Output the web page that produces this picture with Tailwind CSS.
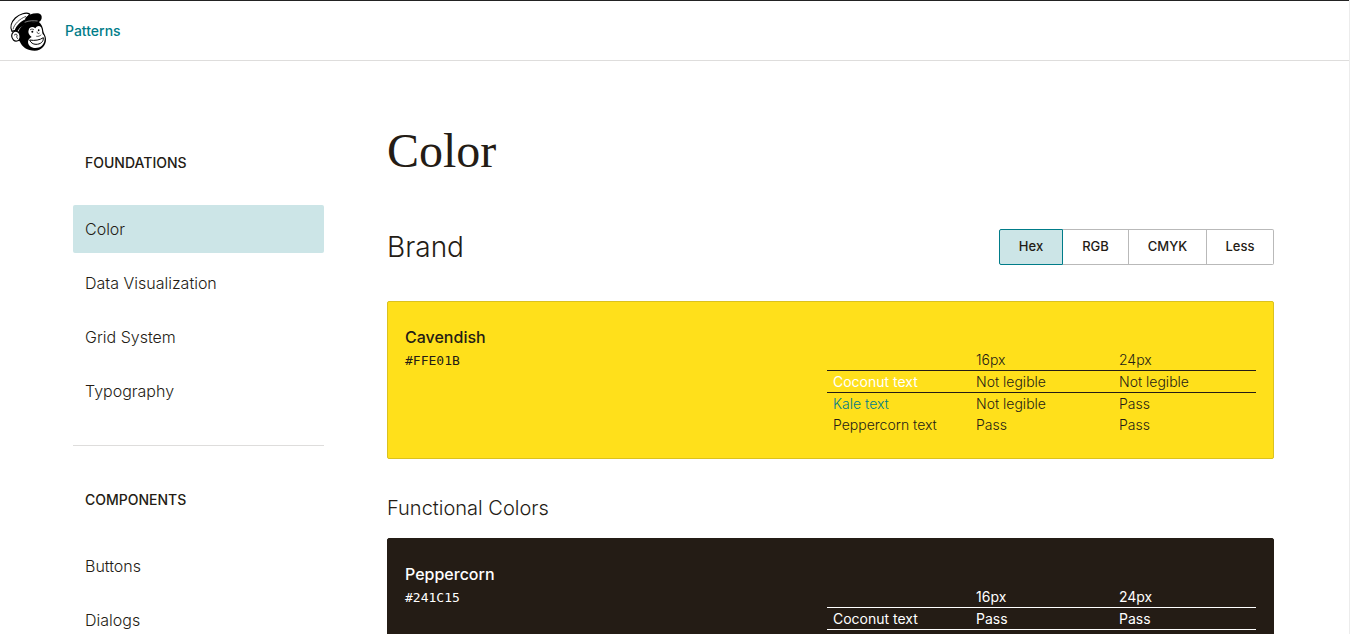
<!DOCTYPE html>
<html lang="en">
<head>
    <meta charset="UTF-8">
    <meta name="viewport" content="width=device-width, initial-scale=1">
    <title>Color | Patterns</title>
    <script src="https://cdn.jsdelivr.net/npm/@tailwindcss/browser@4"></script>
</head>
<body class="h-screen overflow-hidden border-r border-[#ececec] bg-white font-['Inter',sans-serif] font-light text-[#241c15]">

    <header class="flex items-center h-[61px] border-t border-t-[#222] border-b border-b-[#dedddc] pl-1">
        <a href="#" aria-label="Home">
            <svg class="w-12 h-[50px]" viewBox="0 0 144 150">
                <!-- head -->
                <path fill="#000" d="M42 80C46 66 58 54 74 51L104 47C113 54 117 64 118 76C119 84 126 89 126 99C127 117 113 134 92 134C70 134 54 124 47 106C42 104 40 90 42 80Z"/>
                <!-- cap -->
                <path fill="#fff" stroke="#000" stroke-width="3.5" stroke-linejoin="round" d="M24 76C17 64 22 48 34 36C47 24 66 18 77 24L68 40C52 47 40 58 34 73Z"/>
                <path fill="none" stroke="#000" stroke-width="2" d="M27 70C31 54 46 39 66 31"/>
                <path fill="#000" d="M64 36C71 27 84 22 98 22C109 22 114 28 113 35C113 43 106 49 95 50C80 49 64 55 53 62C46 66 42 72 39 79L33 74C37 60 49 48 64 42Z"/>
                <path fill="none" stroke="#fff" stroke-width="1.5" d="M62 49C75 43 90 44 101 45"/>
                <!-- ear -->
                <path fill="#fff" stroke="#000" stroke-width="3.5" d="M38 76C29 74 23 82 23 90C24 100 31 107 39 105C46 104 49 97 48 89C47 81 44 77 38 76Z"/>
                <path fill="none" stroke="#000" stroke-width="2.5" stroke-linecap="round" d="M31 87C35 82 41 85 39 90C37 93 39 96 41 98"/>
                <!-- face -->
                <path fill="#fff" d="M74 72C77 62 87 61 94 67C100 57 111 58 113 68C115 74 114 80 116 84C123 90 123 98 121 106C118 119 108 126 95 126C81 126 72 118 72 107C73 100 78 96 83 93C75 88 71 80 74 72Z"/>
                <path fill="none" stroke="#000" stroke-width="2" stroke-linecap="round" d="M79 71C83 68 86 69 89 71M99 78C99 83 104 84 106 82M98 91C103 92 108 90 111 87"/>
                <ellipse cx="85" cy="77" rx="3" ry="3"/>
                <ellipse cx="104" cy="73" rx="2.5" ry="3"/>
                <!-- smile -->
                <path fill="#fff" stroke="#000" stroke-width="3" stroke-linejoin="round" d="M77 102C92 105 108 102 118 95C119 108 109 115 96 115C87 115 80 110 77 102Z"/>
            </svg>
        </a>
        <a href="#" class="ml-[13px] text-sm leading-5 font-medium text-[#007c89]">Patterns</a>
    </header>

    <div class="flex gap-[63px] pl-[73px] pr-[75px]">

        <nav class="w-[251px] shrink-0 pt-[92px] text-base">
            <h2 class="mb-8 px-3 text-sm leading-5 font-medium">FOUNDATIONS</h2>
            <ul class="flex flex-col gap-1.5">
                <li><a href="#" class="flex items-center h-12 px-3 rounded-xs bg-[#cce5e7]">Color</a></li>
                <li><a href="#" class="flex items-center h-12 px-3">Data Visualization</a></li>
                <li><a href="#" class="flex items-center h-12 px-3">Grid System</a></li>
                <li><a href="#" class="flex items-center h-12 px-3">Typography</a></li>
            </ul>
            <hr class="mt-[30px] mb-11 border-[#dedddc]">
            <h2 class="mb-8 px-3 text-sm leading-5 font-medium">COMPONENTS</h2>
            <ul class="flex flex-col gap-1.5">
                <li><a href="#" class="flex items-center h-12 px-3">Buttons</a></li>
                <li><a href="#" class="flex items-center h-12 px-3">Dialogs</a></li>
            </ul>
        </nav>

        <main class="flex-1 pt-[62px]">
            <h1 class="font-['Liberation_Serif',serif] text-5xl leading-[56px] font-normal">Color</h1>

            <div class="mt-[50px] flex items-center justify-between">
                <h2 class="text-[28px] leading-9">Brand</h2>
                <div class="flex text-[13px] font-medium">
                    <button type="button" class="h-9 w-16 rounded-l-xs border border-[#007c89] bg-[#cce5e7]">Hex</button>
                    <button type="button" class="h-9 w-[66px] border border-l-0 border-[#b9b9b9]">RGB</button>
                    <button type="button" class="h-9 w-[78px] border border-l-0 border-[#b9b9b9]">CMYK</button>
                    <button type="button" class="h-9 w-[67px] rounded-r-xs border border-l-0 border-[#b9b9b9]">Less</button>
                </div>
            </div>

            <section class="mt-9 rounded-xs border border-[#dbc21f] bg-[#ffe01b] px-[17px] pt-6 pb-[23px]">
                <h3 class="text-base leading-[23px] font-medium">Cavendish</h3>
                <div class="flex justify-between">
                    <code class="font-['DejaVu_Sans_Mono',monospace] text-[13px] leading-[23px] font-normal">#FFE01B</code>
                    <table class="w-[429px] table-fixed text-left text-sm leading-[21px]">
                        <thead>
                            <tr class="border-b border-[#241c15]">
                                <td></td>
                                <th scope="col" class="pl-1.5 font-light">16px</th>
                                <th scope="col" class="pl-1.5 font-light">24px</th>
                            </tr>
                        </thead>
                        <tbody>
                            <tr class="border-b border-[#241c15]">
                                <th scope="row" class="pl-1.5 font-normal text-white">Coconut text</th>
                                <td class="pl-1.5">Not legible</td>
                                <td class="pl-1.5">Not legible</td>
                            </tr>
                            <tr>
                                <th scope="row" class="pl-1.5 font-light text-[#007c89]">Kale text</th>
                                <td class="pl-1.5">Not legible</td>
                                <td class="pl-1.5">Pass</td>
                            </tr>
                            <tr>
                                <th scope="row" class="pl-1.5 font-light">Peppercorn text</th>
                                <td class="pl-1.5">Pass</td>
                                <td class="pl-1.5">Pass</td>
                            </tr>
                        </tbody>
                    </table>
                </div>
            </section>

            <h2 class="mt-[35px] mb-4 text-xl leading-7">Functional Colors</h2>

            <section class="rounded-xs border border-[#241c15] bg-[#241c15] px-[17px] pt-6 pb-[23px] font-normal text-white">
                <h3 class="text-base leading-[23px] font-medium">Peppercorn</h3>
                <div class="flex justify-between">
                    <code class="font-['DejaVu_Sans_Mono',monospace] text-[13px] leading-[23px]">#241C15</code>
                    <table class="w-[429px] table-fixed text-left text-sm leading-[21px]">
                        <thead>
                            <tr class="border-b border-white">
                                <td></td>
                                <th scope="col" class="pl-1.5 font-normal">16px</th>
                                <th scope="col" class="pl-1.5 font-normal">24px</th>
                            </tr>
                        </thead>
                        <tbody>
                            <tr class="border-b border-white">
                                <th scope="row" class="pl-1.5 font-normal">Coconut text</th>
                                <td class="pl-1.5">Pass</td>
                                <td class="pl-1.5">Pass</td>
                            </tr>
                        </tbody>
                    </table>
                </div>
            </section>
        </main>
    </div>

</body>
</html>
